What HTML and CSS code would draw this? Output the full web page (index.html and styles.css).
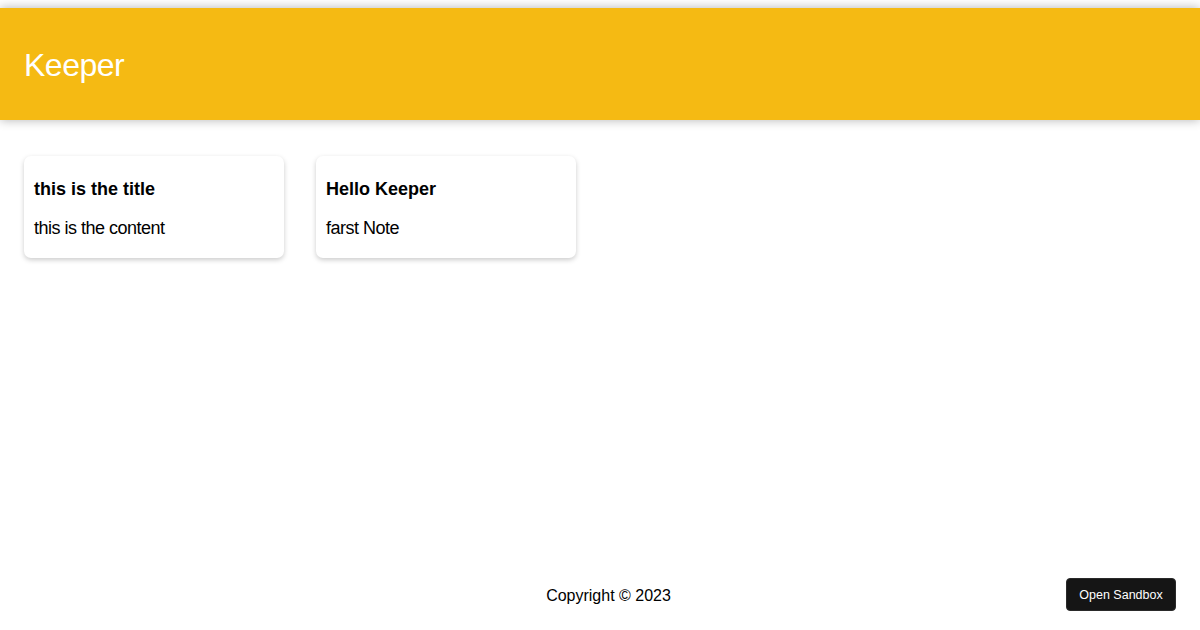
FILE: index.html
```html
<!DOCTYPE html>
<html lang="en">
<head>
<meta charset="utf-8">
<title>Keeper</title>
<link rel="stylesheet" href="styles.css">
</head>
<body>
  <header class="header">
    <h1 class="brand">Keeper</h1>
  </header>
  <main class="notes">
    <div class="note">
      <h1 class="note-title">this is the title</h1>
      <p class="note-text">this is the content</p>
    </div>
    <div class="note">
      <h1 class="note-title">Hello Keeper</h1>
      <p class="note-text">farst Note</p>
    </div>
  </main>
  <footer class="footer">
    <p class="copy">Copyright © 2023</p>
  </footer>
  <a class="sandbox-btn" href="#">Open Sandbox</a>
</body>
</html>
```
FILE: styles.css
```css
html, body {
  margin: 0;
  padding: 0;
}
body {
  font-family: "Liberation Sans", Arial, sans-serif;
  color: #000;
  background: #fff;
  min-height: 630px;
  box-sizing: border-box;
  padding: 8px 0 0 8px;
  display: flex;
  flex-direction: column;
}
.header {
  background: #f5ba13;
  margin-left: -8px;
  height: 112px;
  box-shadow: 0 0 10px 0 rgba(0, 0, 0, 0.3);
  display: flex;
  align-items: center;
  padding-left: 24px;
  position: relative;
  z-index: 1;
}
.brand {
  margin: 0;
  color: #fff;
  font-size: 32px;
  font-weight: 400;
  line-height: 1;
  letter-spacing: -0.5px;
  padding-top: 1px;
}
.notes {
  flex: 1;
  display: flex;
  align-items: flex-start;
  gap: 32px;
  padding: 36px 16px 0;
}
.note {
  background: #fff;
  border-radius: 7px;
  box-shadow: 0 2px 5px #ccc;
  padding: 10px;
  width: 240px;
  height: 82px;
}
.note-title {
  font-size: 18px;
  font-weight: 700;
  margin: 13px 0 0;
  line-height: 20px;
}
.note-text {
  font-size: 18px;
  margin: 19px 0 0;
  line-height: 20px;
  letter-spacing: -0.5px;
}
.footer {
  height: 43px;
  padding-left: 9px;
  text-align: center;
}
.copy {
  margin: 0;
  font-size: 16px;
  line-height: 18px;
}
.sandbox-btn {
  position: fixed;
  left: 1066px;
  top: 578px;
  width: 110px;
  height: 33px;
  box-sizing: border-box;
  background: #151515;
  color: #fff;
  border-radius: 4px;
  border: 1px solid #2a2a2a;
  font-family: "Liberation Sans", Arial, sans-serif;
  font-size: 12.5px;
  text-decoration: none;
  display: flex;
  align-items: center;
  justify-content: center;
}
```
